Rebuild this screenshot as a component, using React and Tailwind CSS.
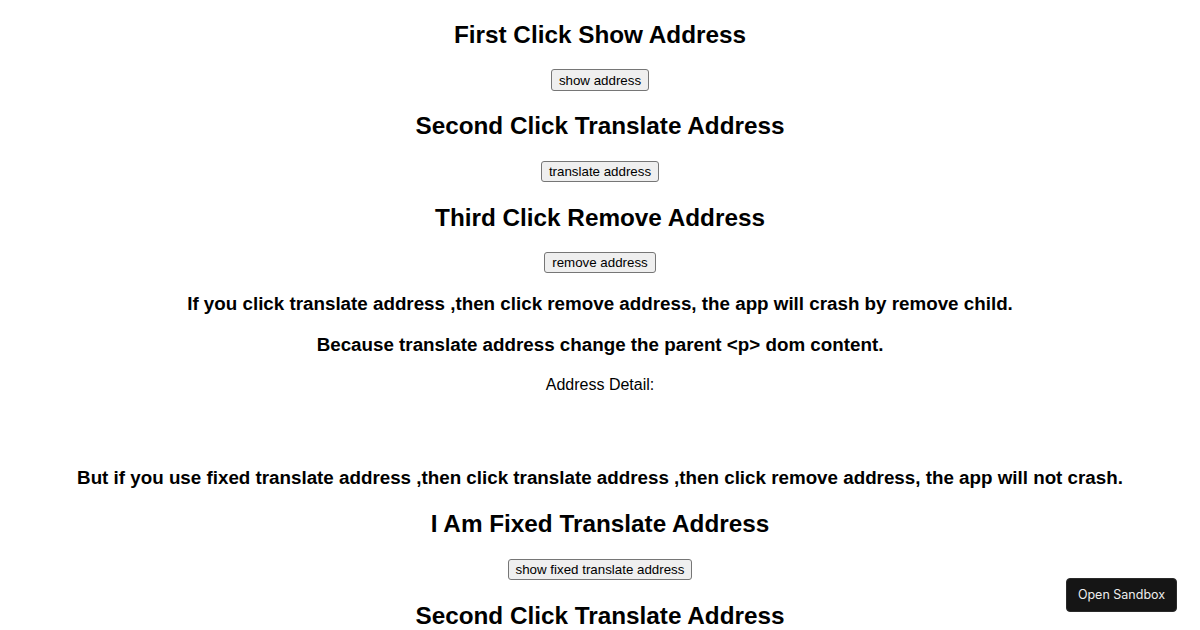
import React from "react";

function Heading({ children }) {
  return (
    <h2 className="text-[24.3px] font-bold leading-[29px] my-[19.92px]">
      {children}
    </h2>
  );
}

function SubHeading({ children }) {
  return (
    <h3 className="text-[18.8px] font-bold leading-[22.5px] my-[18.72px]">
      {children}
    </h3>
  );
}

function NativeButton({ children }) {
  return (
    <div className="flex justify-center items-center h-[22.5px]">
      <button className="h-[21.5px] px-[7px] text-[13.333px] leading-[15px] text-black bg-[#efefef] border border-[#767676] rounded-[3px]">
        {children}
      </button>
    </div>
  );
}

export default function App() {
  return (
    <div className="bg-white text-black text-center font-['Liberation_Sans',Arial,sans-serif] text-[16px] overflow-hidden h-[630px] relative">
      <div className="flow-root">
        <Heading>First Click Show Address</Heading>
        <NativeButton>show address</NativeButton>
        <Heading>Second Click Translate Address</Heading>
        <NativeButton>translate address</NativeButton>
        <Heading>Third Click Remove Address</Heading>
        <NativeButton>remove address</NativeButton>
        <SubHeading>
          If you click translate address ,then click remove address, the app will crash by remove child.
        </SubHeading>
        <SubHeading>
          Because translate address change the parent &lt;p&gt; dom content.
        </SubHeading>
        <p className="my-[16px] leading-[19.2px]">Address Detail:</p>
        <div className="h-[38px]"></div>
        <SubHeading>
          But if you use fixed translate address ,then click translate address ,then click remove address, the app will not crash.
        </SubHeading>
        <Heading>I Am Fixed Translate Address</Heading>
        <NativeButton>show fixed translate address</NativeButton>
        <Heading>Second Click Translate Address</Heading>
      </div>

      <button className="fixed right-[23px] bottom-[18px] w-[111px] h-[34px] rounded-[4px] bg-[#151515] border border-[#2a2a2a] text-[#ededed] text-[12.5px] font-['Inter',sans-serif]">
        Open Sandbox
      </button>
    </div>
  );
}
